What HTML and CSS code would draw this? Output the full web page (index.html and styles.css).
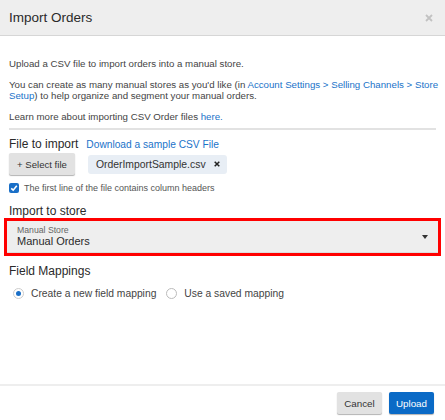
FILE: index.html
```html
<!DOCTYPE html>
<html lang="en">
<head>
    <meta charset="UTF-8">
    <title>Import Orders</title>
    <link rel="stylesheet" href="styles.css">
</head>
<body>
    <div class="modal">
        <div class="modal-head">
            <h1>Import Orders</h1>
            <svg class="close" width="8" height="8" viewBox="0 0 8 8"><path d="M1 1 L7 7 M7 1 L1 7" stroke="#c2c2c2" stroke-width="1.8"/></svg>
        </div>

        <div class="modal-body">
            <p>Upload a CSV file to import orders into a manual store.</p>
            <p>You can create as many manual stores as you'd like (in <a href="#">Account Settings &gt; Selling Channels &gt; Store Setup</a>) to help organize and segment your manual orders.</p>
            <p class="last">Learn more about importing CSV Order files <a href="#">here.</a></p>
            <hr>

            <div class="file-title">
                <span class="label">File to import</span>
                <a href="#">Download a sample CSV File</a>
            </div>
            <div class="file-row">
                <button class="btn">+ Select file</button>
                <span class="chip">OrderImportSample.csv
                    <svg width="6" height="6" viewBox="0 0 6 6"><path d="M0.7 0.7 L5.3 5.3 M5.3 0.7 L0.7 5.3" stroke="#222" stroke-width="1.5"/></svg>
                </span>
            </div>
            <label class="check">
                <span class="box">
                    <svg width="8" height="8" viewBox="0 0 8 8"><path d="M1.2 4.3 L3.2 6.2 L6.8 1.8" fill="none" stroke="#fff" stroke-width="1.6"/></svg>
                </span>
                The first line of the file contains column headers
            </label>

            <div class="label store-label">Import to store</div>
            <div class="highlight">
                <div class="select">
                    <div>
                        <div class="small">Manual Store</div>
                        <div class="value">Manual Orders</div>
                    </div>
                    <span class="arrow"></span>
                </div>
            </div>

            <div class="label map-label">Field Mappings</div>
            <div class="radios">
                <label class="radio"><span class="dot on"></span>Create a new field mapping</label>
                <label class="radio"><span class="dot"></span>Use a saved mapping</label>
            </div>
        </div>

        <div class="modal-foot">
            <button class="btn">Cancel</button>
            <button class="btn primary">Upload</button>
        </div>
    </div>
</body>
</html>
```

FILE: styles.css
```css
*{
    margin: 0;
    padding: 0;
    box-sizing: border-box;
}
body{
    font-family: "Liberation Sans", Arial, sans-serif;
    color: #333;
    background-color: #fff;
}
a{
    color: #1a73c9;
    text-decoration: none;
}
.modal{
    width: 445px;
    height: 420px;
    display: flex;
    flex-direction: column;
}
.modal-head{
    height: 36px;
    background-color: #eeeeee;
    border-bottom: 1px solid #d6d6d6;
    display: flex;
    align-items: center;
    justify-content: space-between;
    padding: 0 12px 0 9px;
}
.modal-head h1{
    font-size: 13.5px;
    font-weight: normal;
    color: #2a2a2a;
}
.modal-body{
    flex: 1;
    padding: 22px 9px 0 9px;
}
.modal-body p{
    font-size: 9.7px;
    line-height: 11px;
    color: #444;
    margin: 0 -5px 10px 0;
}
.modal-body p.last{
    margin-bottom: 6px;
}
hr{
    border: none;
    height: 2px;
    background-color: #e2e2e2;
    margin: 0 0 7px 0;
}
.label{
    font-size: 12px;
    line-height: 14px;
    color: #2a2a2a;
}
.file-title{
    display: flex;
    align-items: baseline;
    gap: 8px;
    line-height: 14px;
}
.file-title a{
    font-size: 10.2px;
}
.file-row{
    display: flex;
    align-items: center;
    gap: 13px;
    margin-top: 1px;
}
.btn{
    font-family: "Liberation Sans", Arial, sans-serif;
    font-size: 9.6px;
    color: #333;
    background-color: #e2e2e2;
    border: none;
    border-radius: 2px;
    box-shadow: 0 1px 1px rgba(0,0,0,0.3);
    height: 22px;
    padding: 0 8px;
}
.chip{
    background-color: #e8eef5;
    border-radius: 3px;
    font-size: 10.4px;
    color: #333;
    height: 19px;
    display: flex;
    align-items: center;
    padding: 0 7px 0 8px;
    gap: 8px;
}
.check{
    display: flex;
    align-items: center;
    gap: 5px;
    font-size: 9px;
    color: #555;
    margin-top: 7px;
    height: 11px;
}
.check .box{
    width: 10px;
    height: 10px;
    border-radius: 2px;
    background-color: #1a6fc7;
    display: flex;
    align-items: center;
    justify-content: center;
}
.store-label{
    margin-top: 11px;
}
.highlight{
    border: 3px solid #f00;
    margin: 0 -5px 0 -5px;
}
.select{
    background-color: #eeeeee;
    height: 32px;
    display: flex;
    align-items: center;
    justify-content: space-between;
    padding: 0 10px 0 10px;
    border-bottom: 1px solid #ddd;
}
.select .small{
    font-size: 8.7px;
    color: #666;
    line-height: 10px;
}
.select .value{
    font-size: 11px;
    color: #2a2a2a;
    line-height: 13px;
}
.arrow{
    width: 0;
    height: 0;
    border-left: 3.5px solid transparent;
    border-right: 3.5px solid transparent;
    border-top: 4px solid #333;
}
.map-label{
    margin-top: 8px;
}
.radios{
    display: flex;
    gap: 10px;
    margin-top: 10px;
    padding-left: 4px;
}
.radio{
    display: flex;
    align-items: center;
    gap: 7px;
    font-size: 10.3px;
    color: #444;
}
.dot{
    width: 11px;
    height: 11px;
    border-radius: 50%;
    border: 1px solid #bbb;
    background-color: #fff;
    position: relative;
}
.dot.on{
    border-color: #ccc;
}
.dot.on::after{
    content: "";
    position: absolute;
    left: 2px;
    top: 2px;
    width: 5px;
    height: 5px;
    border-radius: 50%;
    background-color: #1a6fc7;
}
.modal-foot{
    height: 36px;
    border-top: 2px solid #eee;
    display: flex;
    justify-content: flex-end;
    align-items: center;
    gap: 7px;
    padding: 0 11px 0 0;
}
.modal-foot .btn{
    height: 22px;
    width: 45px;
    padding: 0;
    font-size: 9.8px;
}
.btn.primary{
    background-color: #0a6ac6;
    color: #fff;
}
```
